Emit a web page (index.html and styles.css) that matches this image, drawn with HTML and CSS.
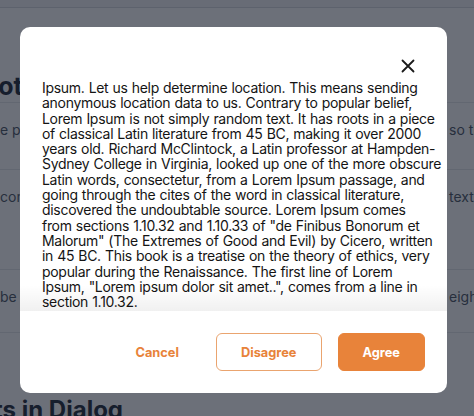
FILE: index.html
```html
<!DOCTYPE html>
<html lang="en">
<head>
<meta charset="utf-8">
<title>Dialog</title>
<link rel="stylesheet" href="styles.css">
</head>
<body>
<div class="page">
  <div class="topbar"></div>
  <h2 class="title">Slot</h2>
  <div class="rows">
    <div class="row row-a"><span class="cell-l">e page content</span><span class="cell-r">so that</span></div>
    <div class="row row-b"><span class="cell-l">content</span><span class="cell-r">text</span></div>
    <div class="row row-c"><span class="cell-l">be fixed</span><span class="cell-r">eight</span></div>
  </div>
  <h2 class="title2">ts in Dialog</h2>
</div>

<div class="overlay">
  <div class="dialog">
    <div class="dialog-header">
      <button class="close" aria-label="Close">
        <svg width="14" height="14" viewBox="0 0 14 14"><path d="M1.5 1.5 L12.5 12.5 M12.5 1.5 L1.5 12.5" stroke="#1a1a1a" stroke-width="1.8" stroke-linecap="round" fill="none"/></svg>
      </button>
    </div>
    <div class="dialog-body">
      <p>Ipsum. Let us help determine location. This means sending<br>
anonymous location data to us. Contrary to popular belief,<br>
Lorem Ipsum is not simply random text. It has roots in a piece<br>
of classical Latin literature from 45 BC, making it over 2000<br>
years old. Richard McClintock, a Latin professor at Hampden-<br>Sydney College in Virginia, looked up one of the more obscure<br>
Latin words, consectetur, from a Lorem Ipsum passage, and<br>
going through the cites of the word in classical literature,<br>
discovered the undoubtable source. Lorem Ipsum comes<br>
from sections 1.10.32 and 1.10.33 of "de Finibus Bonorum et<br>
Malorum" (The Extremes of Good and Evil) by Cicero, written<br>
in 45 BC. This book is a treatise on the theory of ethics, very<br>
popular during the Renaissance. The first line of Lorem<br>
Ipsum, "Lorem ipsum dolor sit amet..", comes from a line in<br>
section 1.10.32.</p>
    </div>
    <div class="dialog-footer">
      <button class="btn btn-text">Cancel</button>
      <button class="btn btn-outline">Disagree</button>
      <button class="btn btn-solid">Agree</button>
    </div>
  </div>
</div>
</body>
</html>
```

FILE: styles.css
```css
* { box-sizing: border-box; }
html, body { margin: 0; padding: 0; }
body {
  width: 474px;
  height: 416px;
  overflow: hidden;
  background: #ffffff;
  font-family: Inter, "Noto Sans", sans-serif;
  color: #1a1a1a;
}
.page {
  height: 416px;
  overflow: hidden;
}
.topbar {
  height: 8px;
  border-bottom: 1px solid #d8dbe0;
  background: #f3f4f6;
}
.title {
  margin: 63px 0 0 -25px;
  height: 31px;
  font-size: 25px;
  line-height: 30px;
  font-weight: 700;
  color: #1f2937;
}
.rows {
  border-top: 1px solid #e5e7eb;
}
.row {
  display: grid;
  grid-template-columns: 449px 1fr;
  border-bottom: 1px solid #e5e7eb;
  font-size: 14px;
  line-height: 18px;
  color: #4b5563;
  white-space: nowrap;
  padding-top: 18px;
}
.row-a { height: 67px; }
.row-b { height: 100px; }
.row-c { height: 63px; }
.title2 {
  margin: 62px 0 0 -6px;
  font-size: 24px;
  line-height: 30px;
  font-weight: 700;
  color: #1f2937;
}

.overlay {
  position: fixed;
  inset: 0;
  background: rgba(17, 24, 39, 0.62);
  display: flex;
  align-items: flex-start;
  padding: 27px 0 0 20px;
}
.dialog {
  width: 427px;
  background: #ffffff;
  border-radius: 10px;
  padding: 0 22px 22px;
  font-family: Inter, "Noto Sans", sans-serif;
}
.dialog-header {
  display: flex;
  justify-content: flex-end;
  padding: 28px 6px 3px 0;
}
.close {
  width: 22px;
  height: 22px;
  border: 0;
  background: transparent;
  padding: 0;
  display: flex;
  align-items: center;
  justify-content: center;
}
.dialog-body {
  position: relative;
  height: 231px;
  margin: 0 -22px;
  padding: 0 22px;
  overflow: hidden;
}
.dialog-body::after {
  content: "";
  position: absolute;
  left: 0;
  right: 0;
  bottom: 0;
  height: 26px;
  background: linear-gradient(to bottom, rgba(0,0,0,0), rgba(0,0,0,0.06));
}
.dialog-body p {
  margin: 0;
  font-size: 14px;
  line-height: 15.3px;
  color: #141414;
  letter-spacing: -0.3px;
  word-spacing: 0.5px;
  white-space: nowrap;
}
.dialog-footer {
  display: flex;
  justify-content: flex-end;
  gap: 16px;
  margin-top: 22px;
}
.btn {
  height: 38px;
  padding: 0 24px;
  border-radius: 6px;
  font-family: Inter, "Noto Sans", sans-serif;
  font-size: 12.8px;
  font-weight: 700;
  cursor: pointer;
}
.btn-text {
  padding: 0 20px;
  background: transparent;
  border: 1px solid transparent;
  color: #e8833a;
}
.btn-outline {
  background: #ffffff;
  border: 1px solid #eaa46f;
  color: #e8833a;
}
.btn-solid {
  background: #e8833a;
  border: 1px solid #e8833a;
  color: #ffffff;
}
```
